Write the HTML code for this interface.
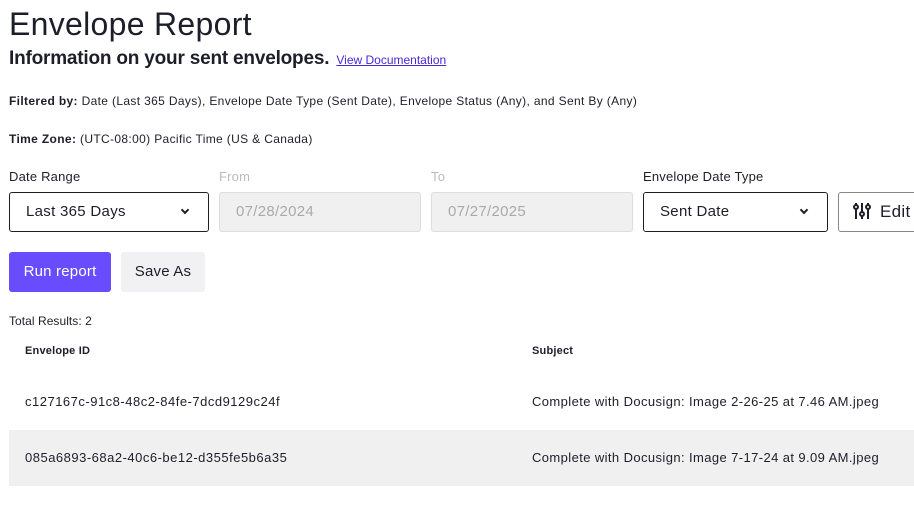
<!DOCTYPE html>
<html><head><meta charset="utf-8"><style>
*{box-sizing:border-box;margin:0;padding:0}
body{width:914px;height:517px;overflow:hidden;background:#fff;font-family:"Liberation Sans",sans-serif;color:#1e1e2a;position:relative}
.a{position:absolute;white-space:nowrap}
h1{position:absolute;left:9px;top:6px;font-size:32px;font-weight:400;color:#1e1e2a;letter-spacing:0.3px}
.sub{left:9px;top:48px;font-size:19px;font-weight:bold;letter-spacing:-0.2px}
.sub a{font-size:12px;font-weight:normal;color:#4a27d6;text-decoration:underline;margin-left:2px;letter-spacing:0}
.s{font-size:12px;letter-spacing:0.05px}
.lbl{font-size:13px;top:169px;letter-spacing:0.2px}
.box{position:absolute;top:192px;height:40px;border:1px solid #1e1e2a;border-radius:3px;font-size:15px;padding:10px 0 0 16px;letter-spacing:0.3px}
.dis{border-color:#ddd;background:#f0f0f0;color:#aaa}
.chev{position:absolute;right:20px;top:14px;width:6px;height:6px;border-right:2px solid #1e1e2a;border-bottom:2px solid #1e1e2a;transform:rotate(45deg)}
.btn{position:absolute;top:252px;height:40px;border-radius:3px;font-size:15px;padding-top:11px;text-align:center;letter-spacing:0.2px}
.row{position:absolute;left:9px;width:905px;font-size:13px;letter-spacing:0.5px}
</style></head><body>
<h1>Envelope Report</h1>
<div class="a sub">Information on your sent envelopes. <a>View Documentation</a></div>
<div class="a s" style="left:9px;top:94px;letter-spacing:0.35px"><b>Filtered by:</b> Date (Last 365 Days), Envelope Date Type (Sent Date), Envelope Status (Any), and Sent By (Any)</div>
<div class="a s" style="left:9px;top:132px;letter-spacing:0.35px"><b>Time Zone:</b> (UTC-08:00) Pacific Time (US &amp; Canada)</div>
<div class="a lbl" style="left:9px">Date Range</div>
<div class="a lbl" style="left:219px;color:#bbb">From</div>
<div class="a lbl" style="left:431px;color:#bbb">To</div>
<div class="a lbl" style="left:643px">Envelope Date Type</div>
<div class="box" style="left:9px;width:200px">Last 365 Days<span class="chev"></span></div>
<div class="box dis" style="left:219px;width:202px">07/28/2024</div>
<div class="box dis" style="left:431px;width:202px">07/27/2025</div>
<div class="box" style="left:643px;width:185px">Sent Date<span class="chev"></span></div>
<div class="box" style="left:838px;width:90px;border-color:#888;padding-left:14px;font-size:17px;padding-top:9px">
<svg width="18" height="18" viewBox="0 0 18 18" style="vertical-align:-3px;margin-right:9px" stroke="#1e1e2a" stroke-width="2" fill="none"><path d="M3 1v16M9 1v16M15 1v16"/><circle cx="3" cy="5" r="2" fill="#fff"/><circle cx="9" cy="12" r="2" fill="#fff"/><circle cx="15" cy="5" r="2" fill="#fff"/></svg>Edit</div>
<div class="btn" style="left:9px;width:102px;background:#6a4cff;color:#fff">Run report</div>
<div class="btn" style="left:121px;width:84px;background:#f1f1f3">Save As</div>
<div class="a s" style="left:9px;top:314px">Total Results: 2</div>
<div class="a" style="left:25px;top:345px;font-size:11px;font-weight:bold;letter-spacing:0.2px">Envelope ID</div>
<div class="a" style="left:532px;top:345px;font-size:11px;font-weight:bold;letter-spacing:0.2px">Subject</div>
<div class="row" style="top:374px;height:56px"><span class="a" style="left:16px;top:20px">c127167c-91c8-48c2-84fe-7dcd9129c24f</span><span class="a" style="left:523px;top:20px;letter-spacing:0.4px">Complete with Docusign: Image 2-26-25 at 7.46 AM.jpeg</span></div>
<div class="row" style="top:430px;height:56px;background:#f0f0f0"><span class="a" style="left:16px;top:20px">085a6893-68a2-40c6-be12-d355fe5b6a35</span><span class="a" style="left:523px;top:20px;letter-spacing:0.4px">Complete with Docusign: Image 7-17-24 at 9.09 AM.jpeg</span></div>
</body></html>
